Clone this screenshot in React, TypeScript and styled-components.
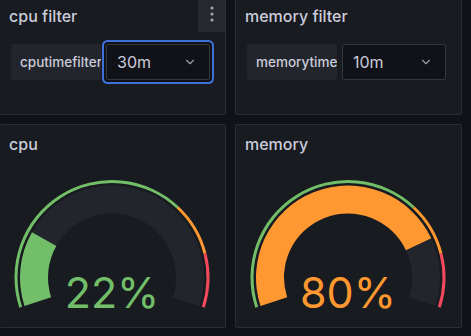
import styled, { createGlobalStyle } from "styled-components";
import { ChevronDown } from "lucide-react";

const GlobalStyle = createGlobalStyle`
  * { box-sizing: border-box; }
  html, body {
    margin: 0;
    padding: 0;
    background: #111217;
    overflow: hidden;
  }
  body {
    font-family: Inter, "Noto Sans", "Liberation Sans", sans-serif;
    color: #ccccdc;
  }
`;

const Grid = styled.div`
  display: grid;
  grid-template-columns: 227px 227px;
  grid-template-rows: 119px 204px;
  column-gap: 9px;
  row-gap: 9px;
  margin: -4px 0 0 -1px;
`;

const Panel = styled.div`
  position: relative;
  display: flex;
  flex-direction: column;
  background: #181b1f;
  border: 1px solid #2a2d33;
  border-radius: 2px;
  overflow: hidden;
`;

const PanelHeader = styled.div`
  display: flex;
  align-items: flex-start;
  justify-content: space-between;
  height: 38px;
  flex: 0 0 38px;
`;

const PanelTitle = styled.div`
  padding: 0 9px;
  height: 38px;
  line-height: 38px;
  font-size: 16px;
  font-weight: 500;
  color: #ccccdc;
  white-space: nowrap;
`;

const MenuButton = styled.button`
  width: 27px;
  height: 35px;
  padding: 0;
  border: none;
  background: #25282d;
  display: flex;
  align-items: flex-end;
  justify-content: center;
  padding-bottom: 10px;
`;

const VariableRow = styled.div`
  display: flex;
  align-items: center;
  gap: 5px;
  padding: 9px 11px 0;
`;

const VariableLabel = styled.label`
  width: 90px;
  height: 36px;
  line-height: 36px;
  padding-left: 9px;
  background: #22252b;
  border-radius: 2px;
  font-size: 13.5px;
  font-weight: 500;
  color: #ccccdc;
  white-space: nowrap;
  overflow: hidden;
`;

const SelectBox = styled.div<{ $focused?: boolean }>`
  width: 104px;
  height: 36px;
  display: flex;
  align-items: center;
  justify-content: space-between;
  padding: 0 12px 0 10px;
  background: #111217;
  border: 1px solid #34373d;
  border-radius: 2px;
  box-shadow: ${(p) =>
    p.$focused ? "0 0 0 2px #111217, 0 0 0 4px #3d71d9" : "none"};
  font-size: 16px;
  color: #ccccdc;
  svg {
    color: #9a9ba5;
  }
`;

const GaugeSvg = styled.svg`
  display: block;
  width: 100%;
  height: 163px;
`;

const ValueText = styled.text`
  font-family: Inter, "Noto Sans", "Liberation Sans", sans-serif;
  font-size: 43px;
  font-weight: 400;
`;

const GREEN = "#73bf69";
const ORANGE = "#ff9830";
const RED = "#f2495c";

const START = 198;
const SWEEP = 216;

const angleOf = (f: number) => START - SWEEP * f;

function point(cx: number, cy: number, r: number, a: number) {
  const rad = (a * Math.PI) / 180;
  return `${(cx + r * Math.cos(rad)).toFixed(2)} ${(cy - r * Math.sin(rad)).toFixed(2)}`;
}

function arcPath(cx: number, cy: number, rIn: number, rOut: number, f0: number, f1: number) {
  const a0 = angleOf(f0);
  const a1 = angleOf(f1);
  const large = a0 - a1 > 180 ? 1 : 0;
  return [
    `M ${point(cx, cy, rOut, a0)}`,
    `A ${rOut} ${rOut} 0 ${large} 1 ${point(cx, cy, rOut, a1)}`,
    `L ${point(cx, cy, rIn, a1)}`,
    `A ${rIn} ${rIn} 0 ${large} 0 ${point(cx, cy, rIn, a0)}`,
    "Z",
  ].join(" ");
}

const colorFor = (v: number) => (v >= 85 ? RED : v >= 70 ? ORANGE : GREEN);

const Gauge = ({ value }: { value: number }) => {
  const cx = 112;
  const cy = 114.5;
  const f = value / 100;
  const color = colorFor(value);
  return (
    <GaugeSvg viewBox="0 0 225 163">
      <path d={arcPath(cx, cy, 94.5, 97.5, 0, 0.7)} fill={GREEN} />
      <path d={arcPath(cx, cy, 94.5, 97.5, 0.7, 0.85)} fill={ORANGE} />
      <path d={arcPath(cx, cy, 94.5, 97.5, 0.85, 1)} fill={RED} />
      <path d={arcPath(cx, cy, 64, 92, 0, 1)} fill="#22252b" />
      <path d={arcPath(cx, cy, 64, 92, 0, f)} fill={color} />
      <ValueText x={cx} y={145} textAnchor="middle" fill={color}>
        {value}%
      </ValueText>
    </GaugeSvg>
  );
};

const Kebab = () => (
  <svg width="4" height="16" viewBox="0 0 4 16">
    <circle cx="2" cy="2" r="1.6" fill="#a3a4ad" />
    <circle cx="2" cy="8" r="1.6" fill="#a3a4ad" />
    <circle cx="2" cy="14" r="1.6" fill="#a3a4ad" />
  </svg>
);

const FilterPanel = ({
  title,
  label,
  value,
  focused,
  menu,
}: {
  title: string;
  label: string;
  value: string;
  focused?: boolean;
  menu?: boolean;
}) => (
  <Panel>
    <PanelHeader>
      <PanelTitle>{title}</PanelTitle>
      {menu && (
        <MenuButton>
          <Kebab />
        </MenuButton>
      )}
    </PanelHeader>
    <VariableRow>
      <VariableLabel>{label}</VariableLabel>
      <SelectBox $focused={focused}>
        <span>{value}</span>
        <ChevronDown size={14} strokeWidth={2} />
      </SelectBox>
    </VariableRow>
  </Panel>
);

const GaugePanel = ({ title, value }: { title: string; value: number }) => (
  <Panel>
    <PanelHeader>
      <PanelTitle>{title}</PanelTitle>
    </PanelHeader>
    <Gauge value={value} />
  </Panel>
);

export default function App() {
  return (
    <>
      <GlobalStyle />
      <Grid>
        <FilterPanel title="cpu filter" label="cputimefilter" value="30m" focused menu />
        <FilterPanel title="memory filter" label="memorytimefilter" value="10m" />
        <GaugePanel title="cpu" value={22} />
        <GaugePanel title="memory" value={80} />
      </Grid>
    </>
  );
}
